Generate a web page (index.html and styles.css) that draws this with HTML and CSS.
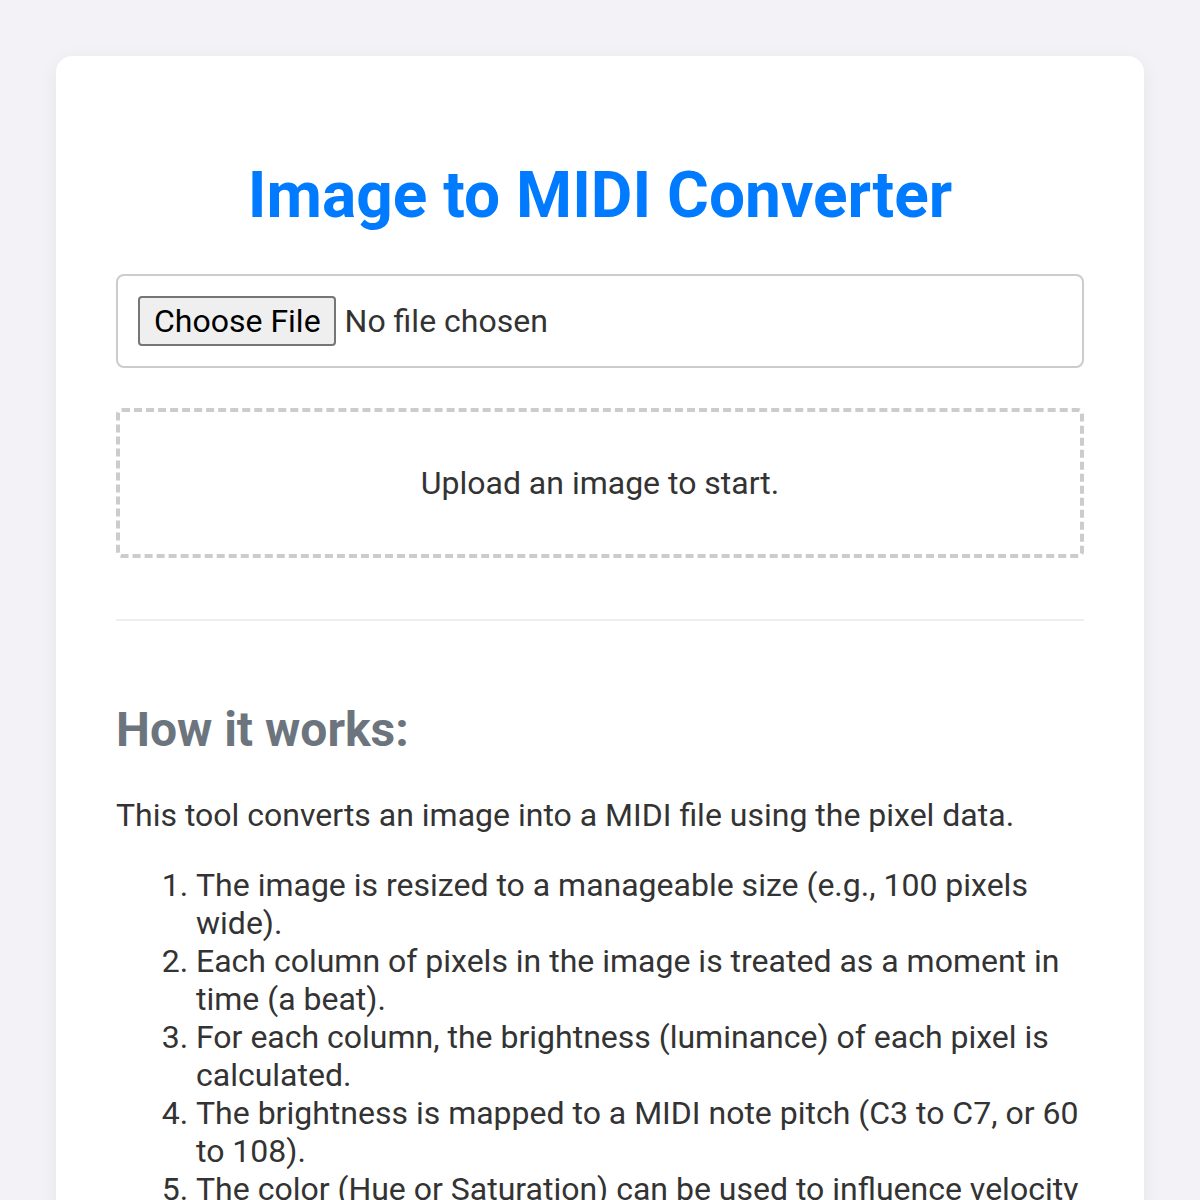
FILE: index.html
```html
<!DOCTYPE html>
<html lang="en">
<head>
    <meta charset="UTF-8">
    <meta name="viewport" content="width=device-width, initial-scale=1.0">
    <title>Image to MIDI Converter</title>
    <link rel="stylesheet" href="styles.css">
</head>
<body>
    <div class="container">
        <h1>Image to MIDI Converter</h1>

        <div class="upload-box">
            <input type="file" id="imageInput" accept="image/*">
        </div>

        <div class="preview" id="preview">
            <p>Upload an image to start.</p>
        </div>

        <hr>

        <div class="info">
            <h2>How it works:</h2>
            <p>This tool converts an image into a MIDI file using the pixel data.</p>
            <ol>
                <li>The image is resized to a manageable size (e.g., 100 pixels wide).</li>
                <li>Each column of pixels in the image is treated as a moment in time (a beat).</li>
                <li>For each column, the brightness (luminance) of each pixel is calculated.</li>
                <li>The brightness is mapped to a MIDI note pitch (C3 to C7, or 60 to 108).</li>
                <li>The color (Hue or Saturation) can be used to influence velocity or other parameters.</li>
            </ol>
        </div>
    </div>
</body>
</html>
```

FILE: styles.css
```css
body {
    font-family: Roboto, "Liberation Sans", Arial, sans-serif;
    font-size: 32px;
    color: #333;
    background-color: #f2f2f7;
    margin: 0;
    padding: 56px;
}
.container {
    background-color: #fff;
    padding: 60px;
    border-radius: 16px;
    box-shadow: 0 4px 20px rgba(0, 0, 0, 0.06);
}
h1 {
    color: #007bff;
    font-size: 64px;
    text-align: center;
    margin: 42px 0 41px;
}
.upload-box {
    border: 2px solid #ccc;
    border-radius: 8px;
    padding: 20px;
}
.upload-box input[type="file"] {
    font-family: inherit;
    font-size: 32px;
    color: #333;
}
.upload-box input[type="file"]::file-selector-button {
    font-family: inherit;
    font-size: 32px;
    color: #000;
    background-color: #efefef;
    border: 2px solid #767676;
    border-radius: 4px;
    padding: 4px 13px 4px 14px;
    margin-right: 9px;
}
.preview {
    margin-top: 40px;
    border: 4px dashed #ccc;
    border-radius: 6px;
    padding: 52px 20px;
    text-align: center;
}
.preview p {
    margin: 0;
}
hr {
    border: none;
    border-top: 2px solid #eee;
    margin: 61px 0 0;
}
.info h2 {
    color: #6c757d;
    font-size: 48px;
    margin: 80px 0 38px;
}
.info p {
    margin: 0 0 32px;
}
.info ol {
    margin: 0;
    padding-left: 80px;
}
```
